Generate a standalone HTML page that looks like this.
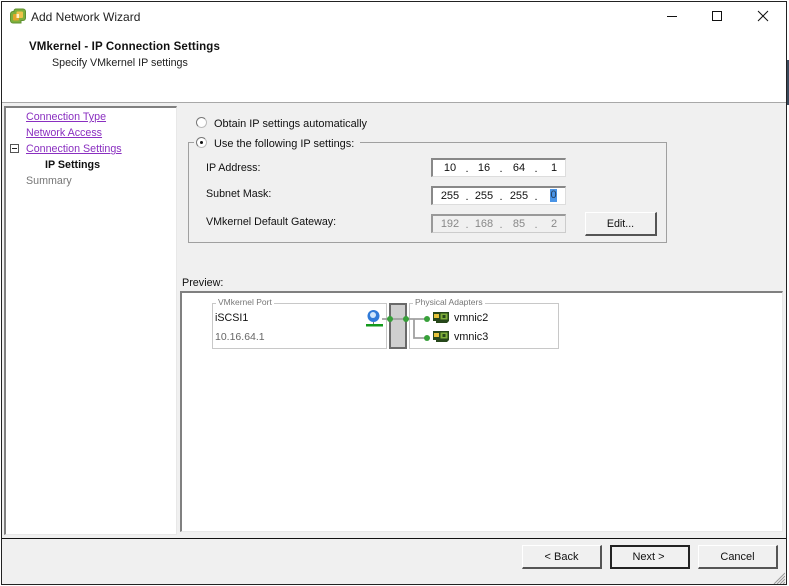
<!DOCTYPE html>
<html><head><meta charset="utf-8"><style>
html,body{margin:0;padding:0;width:789px;height:586px;overflow:hidden;background:#fff}
body{position:relative;font-family:"Liberation Sans",sans-serif;font-size:11px;color:#111}
.a{position:absolute;white-space:nowrap}
.l{color:#8a2fc0;text-decoration:underline}
.box{position:absolute;box-sizing:border-box;background:#fff;border-top:2px solid #808080;border-left:2px solid #808080;border-right:1px solid #e8e8e8;border-bottom:1px solid #e8e8e8}
.btn{position:absolute;box-sizing:border-box;background:#f0f0f0;border-top:1px solid #fff;border-left:1px solid #fff;border-right:2px solid #555;border-bottom:2px solid #555;text-align:center;font-size:11px;line-height:20px;color:#111}
.oct{position:absolute;top:2px;width:22px;text-align:center;font-size:11px;line-height:15px}
</style></head><body>
<div class="a" style="left:0;top:0;width:789px;height:586px;background:#fff"></div>
<!-- content bg -->
<div class="a" style="left:2px;top:102px;width:784px;height:482px;background:#f0f0f0"></div>
<div class="a" style="left:2px;top:102px;width:784px;height:1px;background:#a8a8a8"></div>
<!-- window border -->
<div class="a" style="left:1px;top:1px;width:786px;height:584px;box-sizing:border-box;border:1px solid #222"></div>
<div class="a" style="left:787px;top:60px;width:2px;height:45px;background:#3a4a5c"></div>
<!-- titlebar -->
<svg class="a" style="left:9px;top:7px" width="18" height="18" viewBox="0 0 18 18">
<path d="M7 2h7a2.500 2.500 0 0 1 2.500 2.500V11a2.500 2.500 0 0 1-2.500 2.500H12V16H4a2.500 2.500 0 0 1-2.500-2.500V7A2.500 2.500 0 0 1 4 4.500h1V4a2 2 0 0 1 2-2z" fill="#7fb03c" stroke="#5f9130"/>
<rect x="7.500" y="4.500" width="6.500" height="6.500" rx="1" fill="#f0c24a"/>
<rect x="4" y="7" width="6" height="6.500" rx="1" fill="#e2a52a"/>
<rect x="7.500" y="7" width="2.500" height="4" fill="#fff3c8"/>
</svg>
<div class="a" style="left:31px;top:9px;font-size:12px;line-height:16px;color:#222">Add Network Wizard</div>
<svg class="a" style="left:660px;top:8px" width="120" height="16" viewBox="0 0 120 16"><path d="M7 8.500h10" stroke="#111" fill="none"/><rect x="52.500" y="3.500" width="9" height="9" stroke="#111" fill="none"/><path d="M98 3l10 10M108 3l-10 10" stroke="#111" fill="none"/></svg>
<div class="a" style="left:29px;top:40px;font-size:11.500px;letter-spacing:.12px;line-height:14px;font-weight:bold;color:#111">VMkernel - IP Connection Settings</div>
<div class="a" style="left:52px;top:56px;font-size:10.700px;line-height:14px;color:#222">Specify VMkernel IP settings</div>
<!-- left panel -->
<div class="box" style="left:4px;top:106px;width:173px;height:429px"></div>
<div class="a l" style="left:26px;top:110px;line-height:14px;font-size:10.700px">Connection Type</div>
<div class="a l" style="left:26px;top:126px;line-height:14px;font-size:10.700px">Network Access</div>
<div class="a" style="left:10px;top:144px;width:9px;height:9px;box-sizing:border-box;border:1px solid #555"></div>
<div class="a" style="left:12px;top:148px;width:5px;height:1px;background:#222"></div>
<div class="a l" style="left:26px;top:142px;line-height:14px;font-size:10.700px">Connection Settings</div>
<div class="a" style="left:45px;top:158px;line-height:14px;font-weight:bold;font-size:10.700px">IP Settings</div>
<div class="a" style="left:26px;top:174px;line-height:14px;color:#777;font-size:10.700px">Summary</div>
<!-- radios -->
<div class="a" style="left:196px;top:117px;width:11px;height:11px;box-sizing:border-box;border-radius:50%;background:#fff;border:1px solid #bbb;border-top-color:#777;border-left-color:#777"></div>
<div class="a" style="left:214px;top:117px;line-height:14px;font-size:10.950px">Obtain IP settings automatically</div>
<!-- group -->
<div class="a" style="left:188px;top:142px;width:479px;height:101px;box-sizing:border-box;border:1px solid #a0a0a0"></div>
<div class="a" style="left:194px;top:136px;width:166px;height:14px;background:#f0f0f0"></div>
<div class="a" style="left:196px;top:137px;width:11px;height:11px;box-sizing:border-box;border-radius:50%;background:#fff;border:1px solid #bbb;border-top-color:#777;border-left-color:#777"></div>
<div class="a" style="left:200px;top:141px;width:3px;height:3px;border-radius:50%;background:#111"></div>
<div class="a" style="left:214px;top:137px;line-height:14px;font-size:10.950px">Use the following IP settings:</div>
<div class="a" style="left:206px;top:161px;line-height:14px;font-size:10.700px">IP Address:</div>
<div class="a" style="left:206px;top:187px;line-height:14px;font-size:10.700px">Subnet Mask:</div>
<div class="a" style="left:206px;top:215px;line-height:14px;font-size:10.700px">VMkernel Default Gateway:</div>
<!-- ip fields -->
<div class="a" style="left:431px;top:158px;width:135px;height:19px;box-sizing:border-box;background:#fff;border:1px solid #ddd;border-top:2px solid #888;border-left:2px solid #888">
 <div class="oct" style="left:6px;top:1px">10</div><div class="oct" style="left:40px;top:1px">16</div><div class="oct" style="left:75px;top:1px">64</div><div class="oct" style="left:110px;top:1px">1</div>
 <div class="oct" style="left:23px;top:2px">.</div><div class="oct" style="left:57px;top:2px">.</div><div class="oct" style="left:92px;top:2px">.</div>
</div>
<div class="a" style="left:431px;top:186px;width:135px;height:19px;box-sizing:border-box;background:#fff;border:1px solid #ddd;border-top:2px solid #888;border-left:2px solid #888">
 <div class="oct" style="left:6px;top:1px">255</div><div class="oct" style="left:40px;top:1px">255</div><div class="oct" style="left:75px;top:1px">255</div>
 <div class="oct" style="left:23px;top:2px">.</div><div class="oct" style="left:57px;top:2px">.</div><div class="oct" style="left:92px;top:2px">.</div>
 <div class="a" style="left:117px;top:1px;width:7px;height:13px;background:#4a94e6;color:#27405c;text-align:center;line-height:13px;font-size:11px">0</div>
</div>
<div class="a" style="left:431px;top:214px;width:135px;height:19px;box-sizing:border-box;background:#f0f0f0;border:1px solid #ccc;border-top:2px solid #999;border-left:2px solid #999;color:#888">
 <div class="oct" style="left:6px;top:1px">192</div><div class="oct" style="left:40px;top:1px">168</div><div class="oct" style="left:75px;top:1px">85</div><div class="oct" style="left:110px;top:1px">2</div>
 <div class="oct" style="left:23px;top:2px">.</div><div class="oct" style="left:57px;top:2px">.</div><div class="oct" style="left:92px;top:2px">.</div>
</div>
<div class="btn" style="left:585px;top:212px;width:72px;height:24px;line-height:22px;font-size:10.700px">Edit...</div>
<!-- preview -->
<div class="a" style="left:182px;top:276px;line-height:14px;font-size:10.800px">Preview:</div>
<div class="box" style="left:180px;top:291px;width:603px;height:241px"></div>
<div class="a" style="left:212px;top:303px;width:175px;height:46px;box-sizing:border-box;border:1px solid #c8c8c8"></div>
<div class="a" style="left:216px;top:297px;background:#fff;padding:0 2px;color:#777;font-size:8.500px;line-height:11px">VMkernel Port</div>
<div class="a" style="left:215px;top:311px;line-height:14px;font-size:10.700px">iSCSI1</div>
<div class="a" style="left:215px;top:330px;line-height:14px;color:#666;font-size:10.500px">10.16.64.1</div>
<div class="a" style="left:409px;top:303px;width:150px;height:46px;box-sizing:border-box;border:1px solid #c8c8c8"></div>
<div class="a" style="left:413px;top:297px;background:#fff;padding:0 2px;color:#777;font-size:8.500px;line-height:11px">Physical Adapters</div>
<div class="a" style="left:389px;top:303px;width:18px;height:46px;box-sizing:border-box;background:#cfcfcf;border:2px solid #6a6a6a"></div>
<svg class="a" style="left:360px;top:305px" width="92" height="44" viewBox="0 0 92 44">
<circle cx="13.500" cy="11" r="6" fill="#2f7ad8"/><circle cx="13" cy="10" r="3" fill="#cfe6fb"/><path d="M13.500 17v3" stroke="#777"/><rect x="6" y="19" width="17" height="2.500" fill="#139a1c"/>
<path d="M22 14h45M54 14v19h13" stroke="#a0a0a0" stroke-width="1.800" fill="none"/>
<circle cx="30" cy="14" r="3" fill="#38a03a"/><circle cx="46" cy="14" r="3" fill="#38a03a"/><circle cx="67" cy="14" r="3" fill="#38a03a"/><circle cx="67" cy="33" r="3" fill="#38a03a"/>
<path d="M73 7h16v9l-2 2H76v-2h-3z" fill="#26471a"/><rect x="74" y="9" width="5" height="4" fill="#e6c23a"/><rect x="80.500" y="8.500" width="7" height="6" fill="#7fae3a"/><rect x="82.500" y="10" width="3" height="3" fill="#26471a"/>
<path d="M73 26h16v9l-2 2H76v-2h-3z" fill="#26471a"/><rect x="74" y="28" width="5" height="4" fill="#e6c23a"/><rect x="80.500" y="27.500" width="7" height="6" fill="#7fae3a"/><rect x="82.500" y="29" width="3" height="3" fill="#26471a"/>
</svg>
<div class="a" style="left:454px;top:311px;line-height:14px;font-size:10.800px">vmnic2</div>
<div class="a" style="left:454px;top:330px;line-height:14px;font-size:10.800px">vmnic3</div>
<!-- bottom -->
<div class="a" style="left:2px;top:538px;width:784px;height:1px;background:#111"></div>
<div class="btn" style="left:522px;top:545px;width:80px;height:24px;line-height:22px">&lt; Back</div>
<div class="btn" style="left:610px;top:545px;width:80px;height:24px;line-height:20px;border:2px solid #222;padding-right:3px">Next &gt;</div>
<div class="btn" style="left:698px;top:545px;width:80px;height:24px;line-height:22px">Cancel</div>
<svg class="a" style="left:773px;top:572px" width="12" height="12" viewBox="0 0 12 12"><path d="M1 12L12 1M4 12l8-8M7 12l5-5M10 12l2-2" stroke="#999" fill="none"/></svg>
</body></html>
